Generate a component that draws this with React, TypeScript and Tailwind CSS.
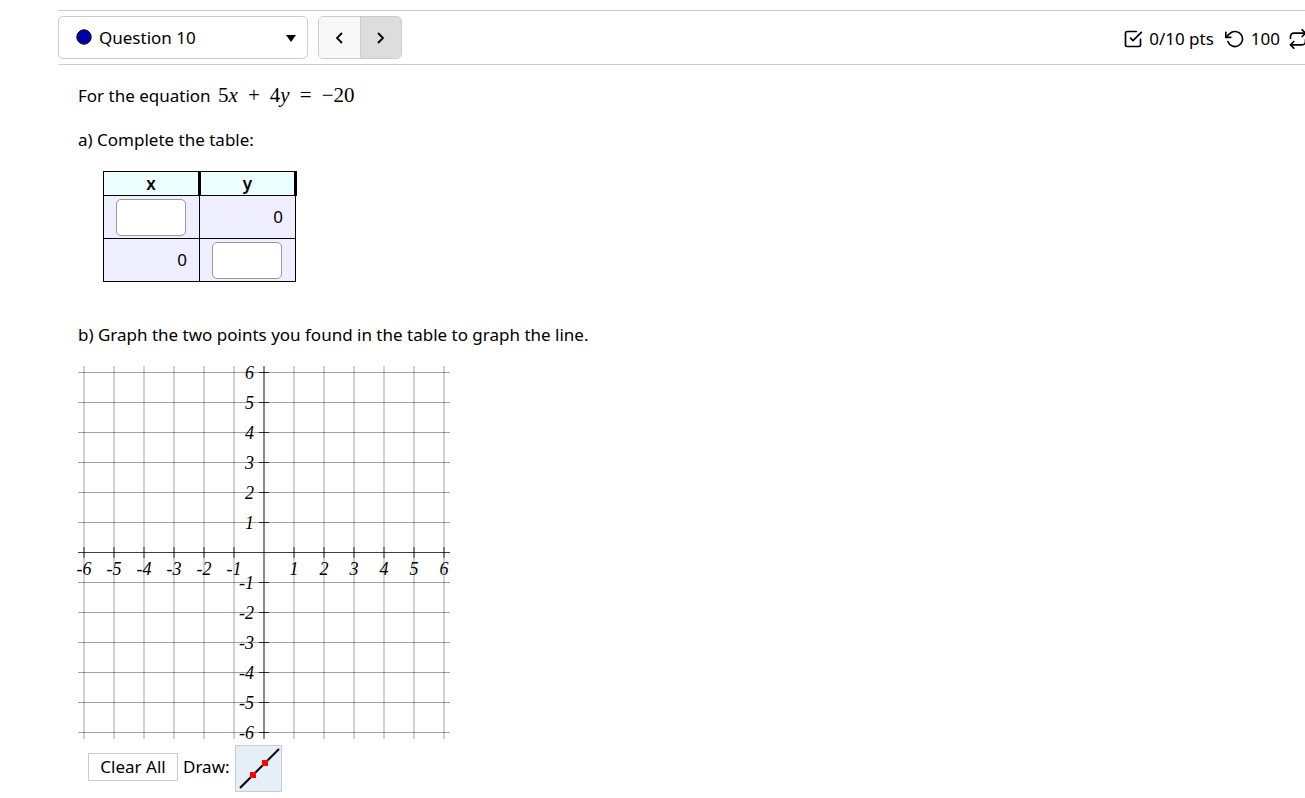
import { useState } from "react";

const STEP = 30;
const ORIGIN = 186;
const SIZE = 372;

const ticks = [-6, -5, -4, -3, -2, -1, 1, 2, 3, 4, 5, 6];

const iconProps = {
  viewBox: "0 0 24 24",
  fill: "none",
  stroke: "currentColor",
  strokeWidth: 2,
  strokeLinecap: "round" as const,
  strokeLinejoin: "round" as const,
  "aria-hidden": true,
};

function CheckIcon() {
  return (
    <svg {...iconProps} className="size-5">
      <polyline points="9 11 12 14 22 4" />
      <path d="M21 12v7a2 2 0 0 1-2 2H5a2 2 0 0 1-2-2V5a2 2 0 0 1 2-2h11" />
    </svg>
  );
}

function RetryIcon() {
  return (
    <svg {...iconProps} className="size-5">
      <polyline points="1 4 1 10 7 10" />
      <path d="M3.51 15a9 9 0 1 0 2.13-9.36L1 10" />
    </svg>
  );
}

function RepeatIcon() {
  return (
    <svg {...iconProps} className="size-5">
      <polyline points="17 1 21 5 17 9" />
      <path d="M3 11V9a4 4 0 0 1 4-4h14" />
      <polyline points="7 23 3 19 7 15" />
      <path d="M21 13v2a4 4 0 0 1-4 4H3" />
    </svg>
  );
}

function QuestionBar() {
  return (
    <header className="flex items-center border-y border-[#ccc] py-[5px]">
      <div className="relative w-[250px]">
        <select
          aria-label="Question"
          className="h-[43px] w-full appearance-none rounded-[5px] border border-[#ccc] bg-white pl-10 pr-8"
        >
          <option>Question 10</option>
        </select>
        <svg viewBox="0 0 16 16" className="pointer-events-none absolute left-[18px] top-[13px] size-4" aria-hidden>
          <circle cx="8" cy="8" r="7.2" fill="#0000a8" stroke="#000" />
        </svg>
        <svg viewBox="0 0 10 7" className="pointer-events-none absolute right-[12px] top-[19px] h-[7px] w-[10px]" aria-hidden>
          <path d="M0 0h10L5 7z" />
        </svg>
      </div>

      <div className="ml-[10px] flex h-[43px] w-[84px] overflow-hidden rounded-[5px] border border-[#ccc]">
        <button type="button" aria-label="Previous question" className="flex flex-1 items-center justify-center border-r border-[#ccc] bg-[#f8f8f8]">
          <svg viewBox="0 0 8 12" className="h-3 w-2" fill="none" stroke="#000" strokeWidth="1.8" aria-hidden>
            <path d="M7 1 2 6l5 5" />
          </svg>
        </button>
        <button type="button" aria-label="Next question" className="flex flex-1 items-center justify-center bg-[#ddd]">
          <svg viewBox="0 0 8 12" className="h-3 w-2" fill="none" stroke="#000" strokeWidth="1.8" aria-hidden>
            <path d="m1 1 5 5-5 5" />
          </svg>
        </button>
      </div>

      <div className="-mr-[3px] ml-auto flex shrink-0 items-center pt-[3px]">
        <CheckIcon />
        <span className="ml-[6px] mr-[11px]">0/10 pts</span>
        <RetryIcon />
        <span className="ml-[6px] mr-[8px]">100</span>
        <RepeatIcon />
      </div>
    </header>
  );
}

function Equation() {
  return (
    <span className="ml-[3px] inline-flex gap-2 font-['Liberation_Serif',serif] text-[21px] leading-6">
      <span>
        5<i>x</i>
      </span>
      <span className="w-4 text-center">+</span>
      <span>
        4<i>y</i>
      </span>
      <span className="w-4 text-center">=</span>
      <span>−20</span>
    </span>
  );
}

function AnswerBox({ label }: { label: string }) {
  return (
    <input
      type="text"
      aria-label={label}
      className="block h-[37px] w-[70px] rounded-[5px] border border-[#999] bg-white px-2"
    />
  );
}

function PointsTable() {
  const head = "w-24 border border-r-[3px] border-black bg-[#ebffff] p-0 font-semibold leading-[23px]";
  const cell = "h-[43px] border border-black bg-[#eeeeff] px-3 py-0 text-right";

  return (
    <table className="ml-[25px] border-collapse">
      <thead>
        <tr>
          <th className={head}>x</th>
          <th className={head}>y</th>
        </tr>
      </thead>
      <tbody>
        <tr>
          <td className={cell}>
            <AnswerBox label="x when y is 0" />
          </td>
          <td className={cell}>0</td>
        </tr>
        <tr>
          <td className={cell}>0</td>
          <td className={cell}>
            <AnswerBox label="y when x is 0" />
          </td>
        </tr>
      </tbody>
    </table>
  );
}

function Graph() {
  return (
    <svg viewBox="0 0 372 373" className="block h-[373px] w-[372px] overflow-visible" role="img" aria-label="Coordinate grid">
      <g stroke="#000" strokeOpacity="0.36">
        {ticks.map((n) => (
          <g key={n}>
            <line x1={ORIGIN + n * STEP} x2={ORIGIN + n * STEP} y1="0" y2="373" />
            <line x1="0" x2={SIZE} y1={ORIGIN + 0.5 - n * STEP} y2={ORIGIN + 0.5 - n * STEP} />
          </g>
        ))}
      </g>
      <g stroke="#000" strokeOpacity="0.75">
        <line x1={ORIGIN} x2={ORIGIN} y1="0" y2="373" strokeWidth="1.2" />
        <line x1="0" x2={SIZE} y1={ORIGIN + 0.5} y2={ORIGIN + 0.5} />
        {ticks.map((n) => (
          <g key={n}>
            <line x1={ORIGIN + n * STEP} x2={ORIGIN + n * STEP} y1="181" y2="192" />
            <line x1="181" x2="191" y1={ORIGIN + 0.5 - n * STEP} y2={ORIGIN + 0.5 - n * STEP} />
          </g>
        ))}
      </g>
      <g className="font-['Liberation_Serif',serif] text-[18px] italic">
        {ticks.map((n) => (
          <g key={n}>
            <text x={ORIGIN + n * STEP} y="209" textAnchor="middle">
              {n}
            </text>
            <text x="176" y={ORIGIN + 7 - n * STEP} textAnchor="end">
              {n}
            </text>
          </g>
        ))}
      </g>
    </svg>
  );
}

export default function App() {
  const [drawing, setDrawing] = useState(true);

  return (
    <div className="overflow-hidden bg-white pl-[58px] pt-[10px] font-['Noto_Sans',sans-serif] text-[17px] leading-6 text-black">
      <QuestionBar />

      <main className="pl-5">
        <p className="mt-[18px]">
          For the equation <Equation />
        </p>
        <p className="mb-[19px] mt-5">a) Complete the table:</p>
        <PointsTable />
        <p className="mb-[19px] mt-[41px]">b) Graph the two points you found in the table to graph the line.</p>
        <Graph />

        <div className="ml-[10px] mt-[6px] flex items-center">
          <div className="flex items-center pb-[3px]">
            <button type="button" className="h-7 w-[90px] border border-[#ccc] bg-white">
              Clear All
            </button>
            <span className="mx-[5px]">Draw:</span>
          </div>
          <button
            type="button"
            aria-label="Line"
            aria-pressed={drawing}
            onClick={() => setDrawing(!drawing)}
            className="size-[47px] border border-[#ccc] bg-[#e4eff8]"
          >
            <svg viewBox="0 0 45 45" className="size-[45px]" aria-hidden>
              <path d="M4 42 43 3" stroke="#000" strokeWidth="2" />
              <rect x="14" y="26" width="6" height="6" fill="#f00" />
              <rect x="26" y="14" width="6" height="6" fill="#f00" />
            </svg>
          </button>
        </div>
      </main>
    </div>
  );
}
